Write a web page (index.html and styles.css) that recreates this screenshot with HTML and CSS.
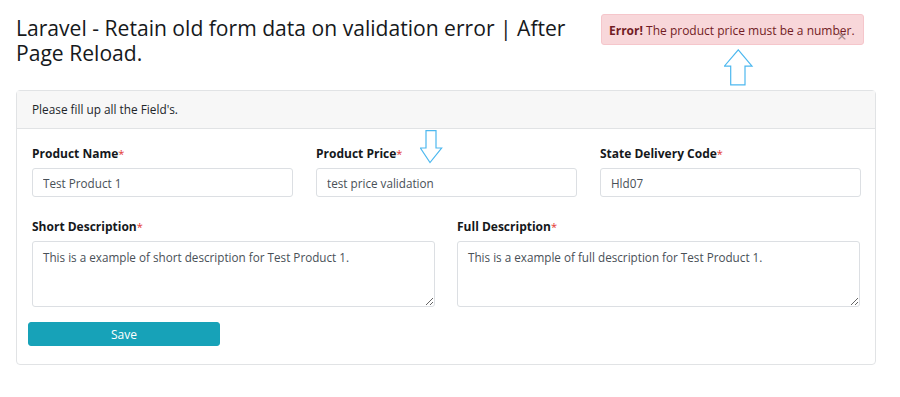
FILE: index.html
```html
<!DOCTYPE html>
<html>
<head>
<meta charset="utf-8">
<link rel="stylesheet" href="styles.css">
</head>
<body>
<div class="page">
  <div class="top">
    <h3 class="title">Laravel - Retain old form data on validation error | After Page Reload.</h3>
    <div class="alert"><strong>Error!</strong> The product price must be a number.<span class="close">×</span></div>
  </div>
  <div class="card">
    <div class="card-header">Please fill up all the Field's.</div>
    <div class="card-body">
      <div class="row3">
        <div class="field">
          <label>Product Name<span class="req">*</span></label>
          <input class="ctl" type="text" value="Test Product 1">
        </div>
        <div class="field">
          <label>Product Price<span class="req">*</span></label>
          <input class="ctl" type="text" value="test price validation">
        </div>
        <div class="field">
          <label>State Delivery Code<span class="req">*</span></label>
          <input class="ctl" type="text" value="Hld07">
        </div>
      </div>
      <div class="row2">
        <div class="field">
          <label>Short Description<span class="req">*</span></label>
          <textarea class="ctl area">This is a example of short description for Test Product 1.</textarea>
        </div>
        <div class="field">
          <label>Full Description<span class="req">*</span></label>
          <textarea class="ctl area">This is a example of full description for Test Product 1.</textarea>
        </div>
      </div>
      <button class="btn">Save</button>
    </div>
  </div>
  <svg class="arrow arrow-up" width="32" height="40" viewBox="0 0 32 40"><path d="M14.3 0.8 L28 17.2 L21 17.2 L21 35.8 L6.7 35.8 L6.7 17.2 L0.3 17.2 Z" fill="none" stroke="#4db8ef" stroke-width="1.2"/></svg>
  <svg class="arrow arrow-down" width="26" height="36" viewBox="0 0 26 36"><path d="M6 0.6 L16 0.6 L16 18 L21.6 18 L10 32.6 L0.4 18 L6 18 Z" fill="none" stroke="#4db8ef" stroke-width="1.2"/></svg>
</div>
</body>
</html>
```
FILE: styles.css
```css
* { box-sizing: border-box; }
body {
  margin: 0;
  background: #fff;
  font-family: "Open Sans", "Noto Sans", sans-serif;
  color: #212529;
}
.page {
  position: relative;
  padding: 0 24px 0 16px;
}
.top {
  display: flex;
  align-items: flex-start;
  height: 90px;
}
.title {
  margin: 15px 0 0 0;
  width: 572px;
  font-size: 21.1px;
  line-height: 25px;
  font-weight: 400;
  color: #16191c;
}
.alert {
  margin: 14px 12px 0 auto;
  width: 263px;
  height: 31px;
  background: #f8d7da;
  border: 1px solid #f5c6cb;
  border-radius: 3px;
  color: #721c24;
  font-size: 12px;
  line-height: 31px;
  padding-left: 7px;
  white-space: nowrap;
  position: relative;
}
.alert strong { font-weight: 700; }
.close {
  position: absolute;
  left: 235px;
  top: 6px;
  font-size: 17px;
  color: #8a6d70;
  opacity: 0.8;
  line-height: 29px;
}
.card {
  border: 1px solid #e1e3e5;
  border-radius: 4px;
  height: 275px;
}
.card-header {
  height: 38px;
  background: #f7f7f7;
  border-bottom: 1px solid #e1e3e5;
  font-size: 11.8px;
  line-height: 37px;
  padding-left: 15px;
  color: #212529;
}
.card-body {
  padding: 16px 15px 0 15px;
}
.row3 {
  display: grid;
  grid-template-columns: 261px 261px 261px;
  column-gap: 23px;
}
.row2 {
  display: grid;
  grid-template-columns: 403px 403px;
  column-gap: 22px;
  margin-top: 21px;
}
.field { display: flex; flex-direction: column; }
label {
  font-size: 12px;
  font-weight: 700;
  line-height: 18px;
  margin-bottom: 5px;
  color: #15181b;
}
.req { color: #e3342f; font-weight: 400; font-size: 11px; vertical-align: top; }
.ctl {
  font-family: "Open Sans", "Noto Sans", sans-serif;
  font-size: 11.7px;
  color: #495057;
  border: 1px solid #dcdfe3;
  border-radius: 3px;
  background: #fff;
  height: 29px;
  padding: 0 10px;
  margin: 0;
  outline: none;
}
.area {
  height: 66px;
  resize: vertical;
  padding: 6px 10px;
  line-height: 18px;
}
.btn {
  margin: 15px 0 0 -4px;
  width: 192px;
  height: 24px;
  background: #17a2b8;
  border: 1px solid #17a2b8;
  border-radius: 3px;
  color: #fff;
  font-family: "Open Sans", "Noto Sans", sans-serif;
  font-size: 12px;
  padding: 0;
  display: block;
}
.arrow { position: absolute; }
.arrow-up { left: 724px; top: 49px; }
.arrow-down { left: 420px; top: 130px; }
```
